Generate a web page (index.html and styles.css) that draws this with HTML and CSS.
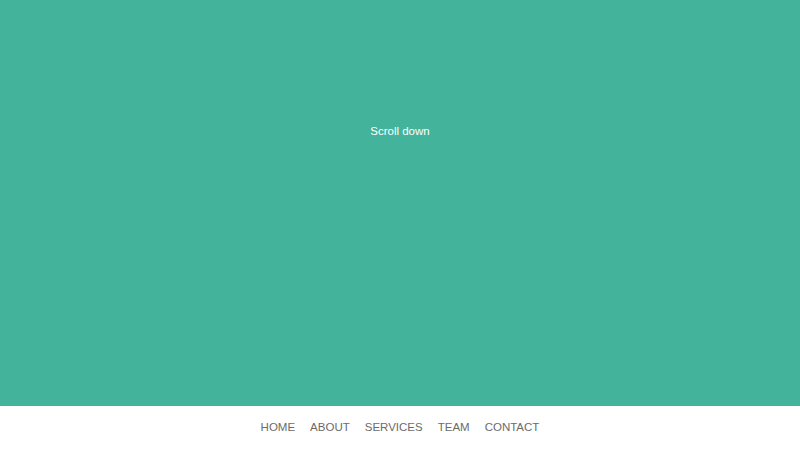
FILE: index.html
```html
<!DOCTYPE html>
<html>
<head>
<meta charset="utf-8">
<link rel="stylesheet" href="styles.css">
</head>
<body>
<section class="hero">
  <p class="hint">Scroll down</p>
</section>
<nav class="nav">
  <a href="#">HOME</a>
  <a href="#">ABOUT</a>
  <a href="#">SERVICES</a>
  <a href="#">TEAM</a>
  <a href="#">CONTACT</a>
</nav>
</body>
</html>
```
FILE: styles.css
```css
html, body {
  margin: 0;
  padding: 0;
  font-family: "Liberation Sans", Arial, sans-serif;
}
.hero {
  height: 406px;
  background: #43b39b;
  display: flex;
  justify-content: center;
  padding-top: 124px;
  box-sizing: border-box;
}
.hint {
  margin: 0;
  color: #fff;
  font-size: 11.5px;
  line-height: 15px;
  height: 15px;
}
.nav {
  height: 44px;
  box-sizing: border-box;
  padding-bottom: 2px;
  background: #fff;
  display: flex;
  justify-content: center;
  align-items: center;
  gap: 15px;
}
.nav a {
  color: #6b6b6b;
  text-decoration: none;
  font-size: 11.5px;
  line-height: 15px;
}
```
